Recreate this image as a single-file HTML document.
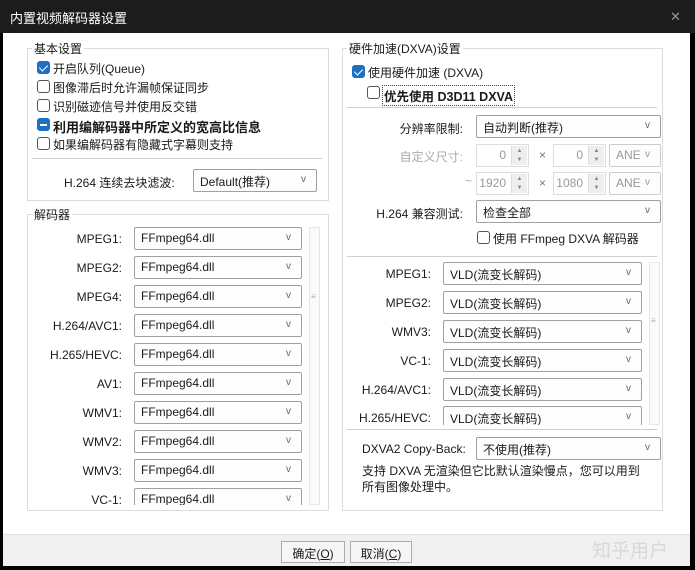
<!DOCTYPE html>
<html><head><meta charset="utf-8"><style>
*{box-sizing:border-box;margin:0;padding:0}
body{width:695px;height:570px;background:#000;position:relative;overflow:hidden;font-family:"Liberation Sans","Noto Sans CJK SC",sans-serif;font-size:12px;color:#1a1a1a}
.a{position:absolute;white-space:nowrap}
.title{left:0;top:0;width:695px;height:33px;background:#1c1c1c;color:#fff;font-size:13px;padding:8px 0 0 10px}
.body{left:3px;top:33px;width:687px;height:532px;background:#fff}
.foot{left:3px;top:534px;width:687px;height:32px;background:#f0f0f0;border-top:1px solid #e0e0e0}
.grp{border:1px solid #dcdcdc}
.lg{background:#fff;padding:0 2px;font-size:12px}
.cb{width:13px;height:13px;border:1px solid #555;border-radius:3px;background:#fff}
.cb.on{background:#1f6fc5;border-color:#1f6fc5}
.cb.on::after{content:"";position:absolute;left:3px;top:1px;width:4px;height:7px;border:solid #fff;border-width:0 1.5px 1.5px 0;transform:rotate(45deg)}
.cb.mid{background:#1f6fc5;border-color:#1f6fc5}
.cb.mid::after{content:"";position:absolute;left:2px;top:5px;width:7px;height:2px;background:#fff}
.dd{height:23px;border:1px solid #a0a0a0;border-radius:2px;background:#fdfdfd;padding:3px 0 0 6px}
.dd::after{content:"v";position:absolute;right:10px;top:4px;font-size:10px;color:#666}
.dd.dis{color:#999;border-color:#ccc}
.dd.dis::after{color:#999}
.lab{text-align:right}
.sb{width:11px;border:1px solid #e6e6e6;background:#fafafa}
.hr{height:1px;background:#cfcfcf}
.sp{height:23px;border:1px solid #ddd;color:#999;text-align:right;padding:3px 22px 0 0;background:#fff}
.spb{position:absolute;right:1px;top:1px;width:16px;height:19px;background:#eee;border-left:1px solid #ddd;font-size:6px;color:#888;text-align:center;line-height:9px;padding-top:1px}
.btn{height:22px;border:1px solid #adadad;background:#f6f6f6;text-align:center;padding-top:3px}
</style></head><body>
<div class="a title">内置视频解码器设置</div>
<div class="a" style="left:670px;top:9px;color:#999;font-size:13px">✕</div>
<div class="a body"></div>
<div class="a foot"></div>

<!-- basic -->
<div class="a grp" style="left:27px;top:48px;width:302px;height:153px"></div>
<div class="a lg" style="left:32px;top:40px">基本设置</div>
<div class="a cb on" style="left:37px;top:61px"></div><div class="a" style="left:53px;top:60px">开启队列(Queue)</div>
<div class="a cb" style="left:37px;top:80px"></div><div class="a" style="left:53px;top:79px">图像滞后时允许漏帧保证同步</div>
<div class="a cb" style="left:37px;top:99px"></div><div class="a" style="left:53px;top:98px">识别磁迹信号并使用反交错</div>
<div class="a cb mid" style="left:37px;top:118px"></div><div class="a" style="left:53px;top:117px;font-weight:bold;font-size:13px">利用编解码器中所定义的宽高比信息</div>
<div class="a cb" style="left:37px;top:137px"></div><div class="a" style="left:53px;top:136px">如果编解码器有隐藏式字幕则支持</div>
<div class="a hr" style="left:32px;top:158px;width:290px"></div>
<div class="a" style="left:64px;top:174px">H.264 连续去块滤波:</div>
<div class="a dd" style="left:193px;top:169px;width:124px">Default(推荐)</div>

<!-- decoders -->
<div class="a grp" style="left:27px;top:214px;width:302px;height:297px"></div>
<div class="a lg" style="left:32px;top:206px">解码器</div>
<div class="a sb" style="left:309px;top:227px;height:278px"></div>
<div class="a" style="left:311px;top:292px;font-size:8px;color:#aaa">≡</div>

<div class="a lab" style="left:30px;top:232px;width:92px">MPEG1:</div><div class="a dd" style="left:134px;top:227px;width:168px">FFmpeg64.dll</div>
<div class="a lab" style="left:30px;top:261px;width:92px">MPEG2:</div><div class="a dd" style="left:134px;top:256px;width:168px">FFmpeg64.dll</div>
<div class="a lab" style="left:30px;top:290px;width:92px">MPEG4:</div><div class="a dd" style="left:134px;top:285px;width:168px">FFmpeg64.dll</div>
<div class="a lab" style="left:30px;top:319px;width:92px">H.264/AVC1:</div><div class="a dd" style="left:134px;top:314px;width:168px">FFmpeg64.dll</div>
<div class="a lab" style="left:30px;top:348px;width:92px">H.265/HEVC:</div><div class="a dd" style="left:134px;top:343px;width:168px">FFmpeg64.dll</div>
<div class="a lab" style="left:30px;top:377px;width:92px">AV1:</div><div class="a dd" style="left:134px;top:372px;width:168px">FFmpeg64.dll</div>
<div class="a lab" style="left:30px;top:406px;width:92px">WMV1:</div><div class="a dd" style="left:134px;top:401px;width:168px">FFmpeg64.dll</div>
<div class="a lab" style="left:30px;top:435px;width:92px">WMV2:</div><div class="a dd" style="left:134px;top:430px;width:168px">FFmpeg64.dll</div>
<div class="a lab" style="left:30px;top:464px;width:92px">WMV3:</div><div class="a dd" style="left:134px;top:459px;width:168px">FFmpeg64.dll</div>
<div class="a" style="left:28px;top:488px;width:300px;height:17px;overflow:hidden">
 <div class="a lab" style="left:2px;top:5px;width:92px">VC-1:</div><div class="a dd" style="left:106px;top:0px;width:168px">FFmpeg64.dll</div>
</div>

<!-- right -->
<div class="a grp" style="left:342px;top:48px;width:321px;height:463px"></div>
<div class="a lg" style="left:347px;top:40px">硬件加速(DXVA)设置</div>
<div class="a cb on" style="left:352px;top:65px"></div><div class="a" style="left:368px;top:64px">使用硬件加速 (DXVA)</div>
<div class="a cb" style="left:367px;top:86px"></div><div class="a" style="left:382px;top:85px;font-weight:bold;font-size:12.5px;border:1px dotted #444;padding:0 1px">优先使用 D3D11 DXVA</div>
<div class="a hr" style="left:347px;top:107px;width:310px"></div>
<div class="a lab" style="left:350px;top:120px;width:113px">分辨率限制:</div><div class="a dd" style="left:476px;top:115px;width:185px">自动判断(推荐)</div>
<div class="a lab" style="left:350px;top:148px;width:113px;color:#aaa">自定义尺寸:</div>
<div class="a sp" style="left:476px;top:144px;width:53px">0<div class="spb">▲<br>▼</div></div>
<div class="a" style="left:539px;top:148px;color:#777">×</div>
<div class="a sp" style="left:553px;top:144px;width:53px">0<div class="spb">▲<br>▼</div></div>
<div class="a dd dis" style="left:609px;top:144px;width:52px">ANE</div>
<div class="a" style="left:465px;top:174px;color:#aaa">~</div>
<div class="a sp" style="left:476px;top:172px;width:53px">1920<div class="spb">▲<br>▼</div></div>
<div class="a" style="left:539px;top:176px;color:#777">×</div>
<div class="a sp" style="left:553px;top:172px;width:53px">1080<div class="spb">▲<br>▼</div></div>
<div class="a dd dis" style="left:609px;top:172px;width:52px">ANE</div>
<div class="a lab" style="left:350px;top:205px;width:113px">H.264 兼容测试:</div><div class="a dd" style="left:476px;top:200px;width:185px">检查全部</div>
<div class="a cb" style="left:477px;top:231px"></div><div class="a" style="left:493px;top:230px">使用 FFmpeg DXVA 解码器</div>
<div class="a hr" style="left:347px;top:256px;width:310px"></div>

<div class="a sb" style="left:649px;top:262px;height:163px"></div>
<div class="a" style="left:651px;top:316px;font-size:8px;color:#aaa">≡</div>
<div class="a lab" style="left:345px;top:267px;width:86px">MPEG1:</div><div class="a dd" style="left:443px;top:262px;width:199px">VLD(流变长解码)</div>
<div class="a lab" style="left:345px;top:296px;width:86px">MPEG2:</div><div class="a dd" style="left:443px;top:291px;width:199px">VLD(流变长解码)</div>
<div class="a lab" style="left:345px;top:325px;width:86px">WMV3:</div><div class="a dd" style="left:443px;top:320px;width:199px">VLD(流变长解码)</div>
<div class="a lab" style="left:345px;top:354px;width:86px">VC-1:</div><div class="a dd" style="left:443px;top:349px;width:199px">VLD(流变长解码)</div>
<div class="a lab" style="left:345px;top:383px;width:86px">H.264/AVC1:</div><div class="a dd" style="left:443px;top:378px;width:199px">VLD(流变长解码)</div>
<div class="a lab" style="left:345px;top:411px;width:86px">H.265/HEVC:</div>
<div class="a" style="left:443px;top:406px;width:200px;height:19px;overflow:hidden"><div class="a dd" style="left:0;top:0;width:199px">VLD(流变长解码)</div></div>
<div class="a hr" style="left:347px;top:429px;width:310px"></div>
<div class="a" style="left:362px;top:442px">DXVA2 Copy-Back:</div><div class="a dd" style="left:476px;top:437px;width:185px">不使用(推荐)</div>
<div class="a" style="left:362px;top:463px;line-height:16px">支持 DXVA 无渲染但它比默认渲染慢点，您可以用到<br>所有图像处理中。</div>

<div class="a btn" style="left:281px;top:541px;width:64px">确定(<u>O</u>)</div>
<div class="a btn" style="left:350px;top:541px;width:62px">取消(<u>C</u>)</div>
<div class="a" style="left:592px;top:536px;font-size:19px;color:#d8d8d8">知乎用户</div>
</body></html>
